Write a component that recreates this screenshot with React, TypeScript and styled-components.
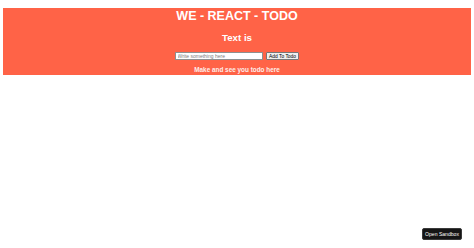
import styled, { createGlobalStyle } from "styled-components";

const GlobalStyle = createGlobalStyle`
  html, body {
    margin: 0;
    padding: 0;
    background: #ffffff;
    font-family: "Liberation Sans", Arial, sans-serif;
  }
  body {
    padding: 8px 3px 0;
  }
`;

const Panel = styled.div`
  background-color: #ff6347;
  color: #ffffff;
  height: 67px;
  display: flex;
  flex-direction: column;
  align-items: center;
  text-align: center;
  box-sizing: border-box;
`;

const Title = styled.h1`
  font-size: 12.5px;
  line-height: 15px;
  font-weight: 700;
  margin: 0.5px 0 0;
`;

const Subtitle = styled.h2`
  font-size: 9.7px;
  line-height: 12px;
  font-weight: 700;
  margin: 8px 0 0;
`;

const Form = styled.div`
  display: flex;
  align-items: center;
  gap: 3px;
  margin-top: 8.5px;
`;

const Input = styled.input`
  width: 88px;
  height: 8px;
  box-sizing: border-box;
  border: 0.5px solid #8f8f8f;
  background: #ffffff;
  padding: 0 1.5px;
  font-family: "Liberation Sans", Arial, sans-serif;
  font-size: 5px;
  outline: none;
  &::placeholder {
    color: #7d7d7d;
  }
`;

const AddButton = styled.button`
  width: 33px;
  height: 8px;
  box-sizing: border-box;
  border: 0.5px solid #767676;
  border-radius: 1px;
  background: #efefef;
  color: #000000;
  padding: 0;
  font-family: "Liberation Sans", Arial, sans-serif;
  font-size: 4.9px;
  line-height: 7px;
`;

const Footer = styled.h4`
  font-size: 6.4px;
  line-height: 8px;
  font-weight: 700;
  margin: 6px 0 0;
  color: #fdeeea;
`;

const SandboxButton = styled.div`
  position: fixed;
  right: 12px;
  bottom: 8px;
  width: 40px;
  height: 12px;
  box-sizing: border-box;
  background: #151515;
  border: 0.5px solid #3a3a3a;
  border-radius: 2px;
  color: #ffffff;
  font-family: "Liberation Sans", Arial, sans-serif;
  font-size: 5.1px;
  display: flex;
  align-items: center;
  justify-content: center;
`;

export default function App() {
  return (
    <>
      <GlobalStyle />
      <Panel>
        <Title>WE - REACT - TODO</Title>
        <Subtitle>Text is</Subtitle>
        <Form>
          <Input type="text" placeholder="Write something here" />
          <AddButton>Add To Todo</AddButton>
        </Form>
        <Footer>Make and see you todo here</Footer>
      </Panel>
      <SandboxButton>Open Sandbox</SandboxButton>
    </>
  );
}
